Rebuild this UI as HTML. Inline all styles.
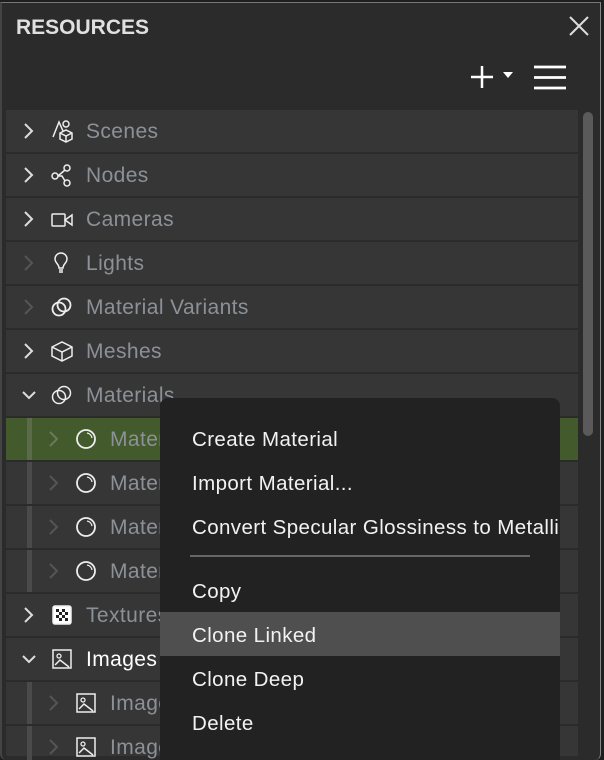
<!DOCTYPE html>
<html><head><meta charset="utf-8"><style>
*{margin:0;padding:0;box-sizing:border-box}
html,body{width:604px;height:760px;overflow:hidden}
body{background:#1e1e1e;font-family:"Liberation Sans","DejaVu Sans",sans-serif;position:relative}
.panel{position:absolute;left:0;top:2px;width:601px;height:758px;background:#2b2b2b;border-top:1px solid #777;border-right:1px solid #888;border-left:2px solid #444;border-radius:0 0 6px 6px}
.title{position:absolute;left:16px;top:16px;color:#e0e0e0;font-weight:bold;font-size:21px}
.row{position:absolute;left:6px;width:572px;height:42px;background:#363636}
.row .chev{position:absolute;left:17px;top:13px}
.row .ic{position:absolute;left:44px;top:9px}
.row .t{position:absolute;left:80px;top:10px;font-size:21px;letter-spacing:0.4px;color:#8c9197;white-space:nowrap}
.child .chev{left:42px}
.child .ic{left:68px}
.child .t{left:104px}
.child:before{content:"";position:absolute;left:21px;top:0;width:5px;height:42px;background:#4a4a4a}
.sel{background:#435a2c}
.sel:before{background:#5b6b4a}
.menu{position:absolute;left:160px;top:398px;width:400px;height:362px;background:#222;border-radius:8px 8px 0 0;overflow:hidden}
.mi{position:absolute;left:0;width:400px;height:44px;color:#f2f2f2;font-size:20.5px;letter-spacing:0.4px;padding:12px 0 0 32px;white-space:nowrap}
</style></head><body>
<div class="panel"></div>
<div class="title">RESOURCES</div>
<svg style="position:absolute;left:568px;top:15px" width="22" height="22"><path d="M2 2L20 20M20 2L2 20" stroke="#ddd" stroke-width="2"/></svg>
<svg style="position:absolute;left:470px;top:64px" width="46" height="26"><path d="M12 2V24M1 13H23" stroke="#fff" stroke-width="2.5"/><path d="M33 8H43L38 14Z" fill="#fff"/></svg>
<svg style="position:absolute;left:534px;top:65px" width="32" height="26"><path d="M0 2H32M0 12.5H32M0 23H32" stroke="#fff" stroke-width="2.8"/></svg>
<div style="position:absolute;left:583px;top:112px;width:10px;height:324px;background:#5a5a5a;border-radius:5px"></div>

<div class="row" style="top:110px"><svg class="chev" width="12" height="16"><path d="M2 1L9 8L2 15" stroke="#ddd" stroke-width="2" fill="none"/></svg><svg class="ic" width="24" height="24"><path d="M3 18L9 3L13 12M10 14L16 11L22 14V20L16 23L10 20ZM10 14L16 17L22 14M16 17V23" stroke="#eee" stroke-width="1.5" fill="none"/><circle cx="16" cy="5" r="3" stroke="#eee" stroke-width="1.5" fill="none"/></svg><span class="t">Scenes</span></div>
<div class="row" style="top:154px"><svg class="chev" width="12" height="16"><path d="M2 1L9 8L2 15" stroke="#ddd" stroke-width="2" fill="none"/></svg><svg class="ic" width="24" height="24"><circle cx="5" cy="13" r="3" stroke="#eee" stroke-width="1.5" fill="none"/><circle cx="17" cy="5" r="3" stroke="#eee" stroke-width="1.5" fill="none"/><circle cx="17" cy="20" r="3" stroke="#eee" stroke-width="1.5" fill="none"/><path d="M8 13L15 7M8 13H12L15 18" stroke="#eee" stroke-width="1.5" fill="none"/></svg><span class="t">Nodes</span></div>
<div class="row" style="top:198px"><svg class="chev" width="12" height="16"><path d="M2 1L9 8L2 15" stroke="#ddd" stroke-width="2" fill="none"/></svg><svg class="ic" width="24" height="24"><rect x="2" y="7" width="13" height="12" rx="1" stroke="#eee" stroke-width="1.5" fill="none"/><path d="M15 13L22 8V18Z" stroke="#eee" stroke-width="1.5" fill="none"/></svg><span class="t">Cameras</span></div>
<div class="row" style="top:242px"><svg class="chev" width="12" height="16"><path d="M2 1L9 8L2 15" stroke="#555" stroke-width="2" fill="none"/></svg><svg class="ic" width="24" height="24"><path d="M9 17C9 13 5 12 5 8A6 6 0 0 1 17 8C17 12 13 13 13 17ZM9 19H13M9 21H13" stroke="#eee" stroke-width="1.5" fill="none"/></svg><span class="t">Lights</span></div>
<div class="row" style="top:286px"><svg class="chev" width="12" height="16"><path d="M2 1L9 8L2 15" stroke="#555" stroke-width="2" fill="none"/></svg><svg class="ic" width="24" height="24"><circle cx="9" cy="14" r="6.5" stroke="#eee" stroke-width="1.8" fill="none"/><circle cx="14" cy="10" r="6.5" stroke="#eee" stroke-width="1.8" fill="none"/></svg><span class="t">Material Variants</span></div>
<div class="row" style="top:330px"><svg class="chev" width="12" height="16"><path d="M2 1L9 8L2 15" stroke="#ddd" stroke-width="2" fill="none"/></svg><svg class="ic" width="24" height="24"><path d="M2 8L12 3L22 8V17L12 22L2 17ZM2 8L12 13L22 8M12 13V22" stroke="#eee" stroke-width="1.5" fill="none"/></svg><span class="t">Meshes</span></div>
<div class="row" style="top:374px"><svg class="chev" width="16" height="12" style="top:16px;left:15px"><path d="M2 2L8 8L14 2" stroke="#ddd" stroke-width="2" fill="none"/></svg><svg class="ic" width="24" height="24"><circle cx="9" cy="14" r="6.5" stroke="#eee" stroke-width="1.5" fill="none"/><circle cx="14" cy="10" r="6.5" stroke="#eee" stroke-width="1.5" fill="none"/></svg><span class="t">Materials</span></div>
<div class="row child sel" style="top:418px"><svg class="chev" width="12" height="16"><path d="M2 1L9 8L2 15" stroke="#6b7a5a" stroke-width="2" fill="none"/></svg><svg class="ic" width="24" height="24"><circle cx="12" cy="12" r="9" stroke="#eee" stroke-width="1.8" fill="none"/><path d="M13 6A6 6 0 0 1 18 11" stroke="#eee" stroke-width="1.3" fill="none"/></svg><span class="t">Material</span></div>
<div class="row child" style="top:462px"><svg class="chev" width="12" height="16"><path d="M2 1L9 8L2 15" stroke="#555" stroke-width="2" fill="none"/></svg><svg class="ic" width="24" height="24"><circle cx="12" cy="12" r="9" stroke="#eee" stroke-width="1.8" fill="none"/><path d="M13 6A6 6 0 0 1 18 11" stroke="#eee" stroke-width="1.3" fill="none"/></svg><span class="t">Material</span></div>
<div class="row child" style="top:506px"><svg class="chev" width="12" height="16"><path d="M2 1L9 8L2 15" stroke="#555" stroke-width="2" fill="none"/></svg><svg class="ic" width="24" height="24"><circle cx="12" cy="12" r="9" stroke="#eee" stroke-width="1.8" fill="none"/><path d="M13 6A6 6 0 0 1 18 11" stroke="#eee" stroke-width="1.3" fill="none"/></svg><span class="t">Material</span></div>
<div class="row child" style="top:550px"><svg class="chev" width="12" height="16"><path d="M2 1L9 8L2 15" stroke="#555" stroke-width="2" fill="none"/></svg><svg class="ic" width="24" height="24"><circle cx="12" cy="12" r="9" stroke="#eee" stroke-width="1.8" fill="none"/><path d="M13 6A6 6 0 0 1 18 11" stroke="#eee" stroke-width="1.3" fill="none"/></svg><span class="t">Material</span></div>
<div class="row" style="top:594px"><svg class="chev" width="12" height="16"><path d="M2 1L9 8L2 15" stroke="#ddd" stroke-width="2" fill="none"/></svg><svg class="ic" width="24" height="24"><rect x="3" y="3" width="18" height="18" rx="2" stroke="#eee" stroke-width="1.5" fill="#fff"/><path d="M6 6h3v3h-3zM12 6h3v3h-3zM9 9h3v3h-3zM15 9h3v3h-3zM6 12h3v3h-3zM12 12h3v3h-3zM9 15h3v3h-3zM15 15h3v3h-3z" fill="#222"/></svg><span class="t">Textures</span></div>
<div class="row" style="top:638px"><svg class="chev" width="16" height="12" style="top:16px;left:15px"><path d="M2 2L8 8L14 2" stroke="#ddd" stroke-width="2" fill="none"/></svg><svg class="ic" width="24" height="24"><rect x="3" y="3" width="18" height="18" stroke="#eee" stroke-width="1.5" fill="none"/><circle cx="9" cy="9" r="2" stroke="#eee" stroke-width="1.3" fill="none"/><path d="M5 18L10 13L19 20" stroke="#eee" stroke-width="1.5" fill="none"/></svg><span class="t" style="color:#fff">Images</span></div>
<div class="row child" style="top:682px"><svg class="chev" width="12" height="16"><path d="M2 1L9 8L2 15" stroke="#555" stroke-width="2" fill="none"/></svg><svg class="ic" width="24" height="24"><rect x="3" y="3" width="18" height="18" stroke="#eee" stroke-width="1.5" fill="none"/><circle cx="9" cy="9" r="2" stroke="#eee" stroke-width="1.3" fill="none"/><path d="M5 18L10 13L19 20" stroke="#eee" stroke-width="1.5" fill="none"/></svg><span class="t">Image</span></div>
<div class="row child" style="top:726px;height:30px"><svg class="chev" width="12" height="16"><path d="M2 1L9 8L2 15" stroke="#555" stroke-width="2" fill="none"/></svg><svg class="ic" width="24" height="24"><rect x="3" y="3" width="18" height="18" stroke="#eee" stroke-width="1.5" fill="none"/><circle cx="9" cy="9" r="2" stroke="#eee" stroke-width="1.3" fill="none"/><path d="M5 18L10 13L19 20" stroke="#eee" stroke-width="1.5" fill="none"/></svg><span class="t">Image</span></div>

<div class="menu">
<div class="mi" style="top:18px">Create Material</div>
<div class="mi" style="top:62px">Import Material...</div>
<div class="mi" style="top:106px">Convert Specular Glossiness to Metallic Roughness</div>
<div style="position:absolute;left:30px;top:157px;width:340px;height:2px;background:#666"></div>
<div class="mi" style="top:170px">Copy</div>
<div class="mi" style="top:214px;background:#4f4f4f">Clone Linked</div>
<div class="mi" style="top:258px">Clone Deep</div>
<div class="mi" style="top:302px">Delete</div>
</div>
</body></html>
